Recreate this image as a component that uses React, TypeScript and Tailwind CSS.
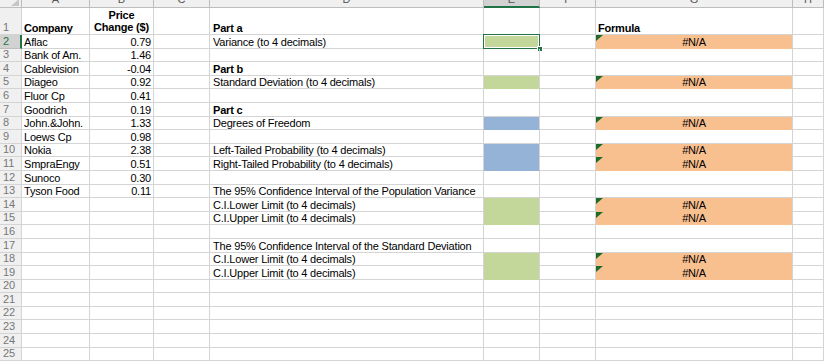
import React from "react";

type Fill = "green" | "blue" | null;

const companies: [string, string][] = [
  ["Aflac", "0.79"],
  ["Bank of Am.", "1.46"],
  ["Cablevision", "-0.04"],
  ["Diageo", "0.92"],
  ["Fluor Cp", "0.41"],
  ["Goodrich", "0.19"],
  ["John.&John.", "1.33"],
  ["Loews Cp", "0.98"],
  ["Nokia", "2.38"],
  ["SmpraEngy", "0.51"],
  ["Sunoco", "0.30"],
  ["Tyson Food", "0.11"],
];

const dText: Record<number, { t: string; bold?: boolean }> = {
  1: { t: "Part a", bold: true },
  2: { t: "Variance (to 4 decimals)" },
  4: { t: "Part b", bold: true },
  5: { t: "Standard Deviation (to 4 decimals)" },
  7: { t: "Part c", bold: true },
  8: { t: "Degrees of Freedom" },
  10: { t: "Left-Tailed Probability (to 4 decimals)" },
  11: { t: "Right-Tailed Probability (to 4 decimals)" },
  13: { t: "The 95% Confidence Interval of the Population Variance" },
  14: { t: "C.I.Lower Limit (to 4 decimals)" },
  15: { t: "C.I.Upper Limit (to 4 decimals)" },
  17: { t: "The 95% Confidence Interval of the Standard Deviation" },
  18: { t: "C.I.Lower Limit (to 4 decimals)" },
  19: { t: "C.I.Upper Limit (to 4 decimals)" },
};

const eFill: Record<number, Fill> = {
  2: "green",
  5: "green",
  8: "blue",
  10: "blue",
  11: "blue",
  14: "green",
  15: "green",
  18: "green",
  19: "green",
};

const gRows = new Set([2, 5, 8, 10, 11, 14, 15, 18, 19]);

const cols = ["", "A", "B", "C", "D", "E", "F", "G", "H"];

const font = { fontFamily: '"Liberation Sans", Arial, sans-serif' };

function Tri() {
  return (
    <svg className="absolute left-0 top-0" width="7" height="6" viewBox="0 0 7 6">
      <polygon points="0,0 7,0 0,6" fill="#1d6b2b" />
    </svg>
  );
}

const cell =
  "border-r border-b border-[#d4d4d4] flex items-end overflow-visible whitespace-nowrap text-[11px] leading-[12px] tracking-[-0.2px] text-black";

export default function App() {
  const rows = Array.from({ length: 25 }, (_, i) => i + 1);
  return (
    <div className="w-[824px] h-[362px] overflow-hidden bg-white" style={font}>
      <div className="grid grid-cols-[22px_68px_64px_56px_274px_56px_56px_197px_1fr] grid-rows-[8px_27px_repeat(24,13.6px)]">
        {/* header row */}
        {cols.map((c, i) => (
          <div
            key={"h" + i}
            className={
              "relative overflow-hidden text-center text-[11px] leading-[11px] text-[#555] " +
              (i === 0
                ? "bg-[#f0f0f0] border-r border-b border-[#bdbdbd]"
                : c === "E"
                ? "bg-[#d2d2d2] border-r border-[#bdbdbd] border-b-2 border-b-[#217346]"
                : "bg-[#f0f0f0] border-r border-b border-[#bdbdbd]")
            }
          >
            {i === 0 ? (
              <svg className="absolute right-[2px] bottom-[1px]" width="8" height="7" viewBox="0 0 8 7">
                <polygon points="8,0 8,7 0,7" fill="#c6c6c6" />
              </svg>
            ) : (
              <div className="mt-[-6px]">{c}</div>
            )}
          </div>
        ))}
        {rows.map((r) => {
          const comp = r >= 2 && r <= 13 ? companies[r - 2] : null;
          const d = dText[r];
          const ef = eFill[r];
          const sel = r === 2;
          return (
            <React.Fragment key={r}>
              {/* row header */}
              <div
                className={
                  "flex items-end pl-[3px] text-[11px] leading-[13px] " +
                  (sel
                    ? "bg-[#d2d2d2] text-[#217346] border-b border-[#bdbdbd] border-r-2 border-r-[#217346]"
                    : "bg-[#f0f0f0] text-[#777] border-b border-r border-[#d4d4d4]")
                }
              >
                {r}
              </div>
              {/* A */}
              <div className={cell + " pl-[2px] " + (r === 1 ? "font-bold" : "")}>
                {r === 1 ? "Company" : comp ? comp[0] : ""}
              </div>
              {/* B */}
              <div className={cell + (r === 1 ? " justify-center text-center font-bold" : " justify-end pr-[2px]")}>
                {r === 1 ? (
                  <div className="leading-[12px] pb-[1px]">
                    Price
                    <br />
                    Change ($)
                  </div>
                ) : comp ? (
                  comp[1]
                ) : (
                  ""
                )}
              </div>
              {/* C */}
              <div className={cell}></div>
              {/* D */}
              <div className={cell + " pl-[3px] " + (d?.bold ? "font-bold" : "")}>{d ? d.t : ""}</div>
              {/* E */}
              <div
                className={
                  "relative border-r border-[#d4d4d4] border-b " +
                  (ef === "green"
                    ? "bg-[#c4d79b] border-b-[#c4d79b]"
                    : ef === "blue"
                    ? "bg-[#95b3d7] border-b-[#95b3d7]"
                    : "border-b-[#d4d4d4]")
                }
              >
                {sel && (
                  <>
                    <div className="absolute left-[-1px] top-[-1px] right-[-1px] bottom-[-1px] border border-[#217346]">
                      <div className="w-full h-full border border-white"></div>
                    </div>
                    <div className="absolute right-[-4px] bottom-[-4px] w-[6px] h-[6px] bg-[#217346] border border-white"></div>
                  </>
                )}
              </div>
              {/* F */}
              <div className={cell}></div>
              {/* G */}
              <div
                className={
                  gRows.has(r)
                    ? "relative flex items-end justify-center text-[11px] leading-[12px] tracking-[-0.2px] border-r border-[#d4d4d4] border-b border-b-[#f8bf8f] bg-[#f8bf8f]"
                    : cell + " pl-[2px] " + (r === 1 ? "font-bold" : "")
                }
              >
                {gRows.has(r) ? (
                  <>
                    <Tri />
                    #N/A
                  </>
                ) : r === 1 ? (
                  "Formula"
                ) : (
                  ""
                )}
              </div>
              {/* H */}
              <div className={cell}></div>
            </React.Fragment>
          );
        })}
      </div>
    </div>
  );
}
